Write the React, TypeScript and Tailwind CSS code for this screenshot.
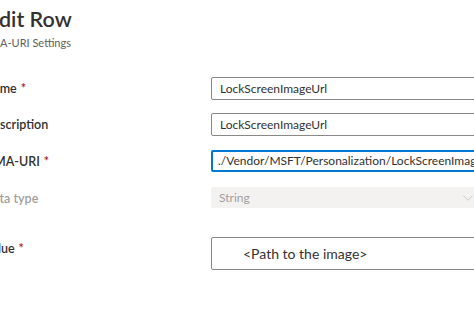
import React from 'react';
import { ChevronDown } from 'lucide-react';

const font = { fontFamily: 'Lato, "Noto Sans", sans-serif' };

interface RowProps {
  label: string;
  required?: boolean;
  disabled?: boolean;
  className?: string;
  children: React.ReactNode;
}

const Row: React.FC<RowProps> = ({ label, required, disabled, className, children }) => (
  <div className={`flex items-start ${className ?? ''}`}>
    <div className="w-[227px] shrink-0 pt-[2px] leading-[16px]">
      <span
        className={`text-[12.5px] font-semibold ${disabled ? 'text-[#a19f9d]' : 'text-[#323130]'}`}
      >
        {label}
      </span>
      {required && <span className="ml-[4px] text-[12.5px] font-semibold text-[#a4262c]">*</span>}
    </div>
    <div className="flex-1 min-w-0">{children}</div>
  </div>
);

export default function App() {
  return (
    <div className="w-[474px] h-[314px] overflow-hidden bg-white" style={font}>
      <div className="-ml-[16px] w-[520px] pt-[5px]">
        <h1 className="ml-[3px] text-[21.5px] leading-[28px] font-semibold text-[#323130]">Edit Row</h1>
        <p className="-ml-[3px] text-[11px] leading-[16px] text-[#605e5c] mt-[2px]">OMA-URI Settings</p>

        <Row label="Name" required className="mt-[26px]">
          <div className="h-[23px] border border-[#8a8886] rounded-[2px] flex items-center px-[8px] text-[12px] text-[#323130]">
            LockScreenImageUrl
          </div>
        </Row>

        <Row label="Description" className="mt-[13px]">
          <div className="h-[23px] border border-[#8a8886] rounded-[2px] flex items-center px-[8px] text-[12px] text-[#323130]">
            LockScreenImageUrl
          </div>
        </Row>

        <Row label="OMA-URI" required className="mt-[14px]">
          <div className="h-[22px] border-2 border-[#0078d4] rounded-[2px] flex items-center px-[4px] text-[12px] text-[#323130] whitespace-nowrap overflow-hidden">
            <span className="w-px h-[13px] bg-[#323130] mr-[1px]" />
            ./Vendor/MSFT/Personalization/LockScreenImageUrl
          </div>
        </Row>

        <Row label="Data type" disabled className="mt-[15px]">
          <div className="h-[21px] w-[280px] bg-[#f3f2f1] rounded-[2px] flex items-center justify-between px-[8px] text-[12px] text-[#a19f9d]">
            <span>String</span>
            <ChevronDown className="w-[18px] h-[18px] mr-[6px] text-[#c8c6c4]" strokeWidth={1.2} />
          </div>
        </Row>

        <Row label="Value" required className="mt-[29px]">
          <div className="h-[33px] border border-[#8a8886] rounded-[2px] flex items-center pl-[31px] text-[14px] text-[#323130]">
            &lt;Path to the image&gt;
          </div>
        </Row>
      </div>
    </div>
  );
}
